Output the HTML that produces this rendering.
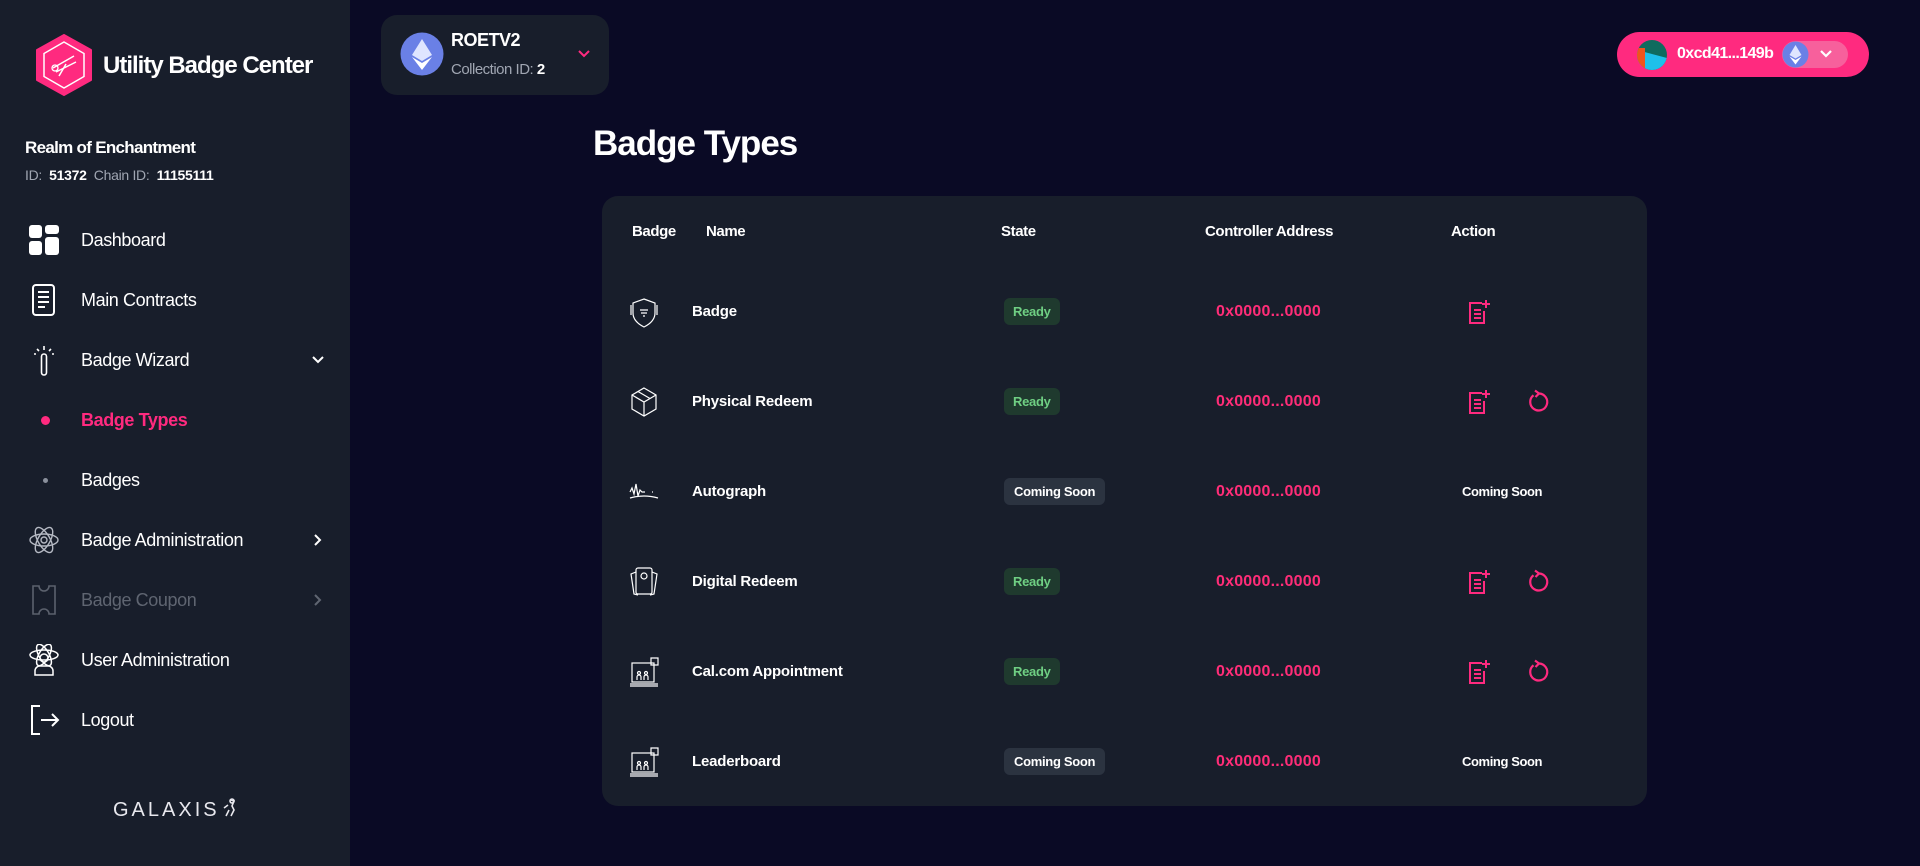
<!DOCTYPE html>
<html><head><meta charset="utf-8"><style>
*{margin:0;padding:0;box-sizing:border-box}
body{width:1920px;height:866px;overflow:hidden;background:#0a0a25;font-family:"Liberation Sans",sans-serif;color:#fff;position:relative}
.sb{position:absolute;left:0;top:0;width:350px;height:866px;background:#181e2b}
.abs{position:absolute}
.mi{position:absolute;left:0;width:350px;height:40px;display:flex;align-items:center}
.mi .ic{position:absolute;left:28px;top:4px;width:32px;height:32px}
.mi .t{position:absolute;left:81px;font-size:18px;letter-spacing:-0.4px}
.chev{position:absolute;left:310px}
.card{position:absolute;left:602px;top:196px;width:1045px;height:610px;background:#181e2b;border-radius:16px}
.th{position:absolute;top:223px;font-size:15px;font-weight:bold;letter-spacing:-0.4px}
.row{position:absolute;left:602px;width:1045px;height:40px}
.row .ic{position:absolute;left:26px;top:4px;width:32px;height:32px}
.row .nm{position:absolute;left:90px;top:11px;font-size:15px;font-weight:bold;letter-spacing:-0.2px}
.pill{position:absolute;left:402px;top:6px;height:27px;border-radius:6px;font-size:13px;font-weight:bold;padding:0 9px;line-height:27px;letter-spacing:-0.3px}
.ready{background:#1f3a2e;color:#6fcf83}
.soon{background:#2b3340;color:#fff;padding:0 10px}
.addr{position:absolute;left:614px;top:11px;color:#ff2d78;font-size:16px;font-weight:bold;letter-spacing:0.2px}
.act1{position:absolute;left:864px;top:7px}
.act2{position:absolute;left:923px;top:7px}
.cs{position:absolute;left:860px;top:12px;font-size:13px;font-weight:bold;letter-spacing:-0.4px}
</style></head><body>
<div class="sb">
  <svg class="abs" style="left:34px;top:34px" width="60" height="62" viewBox="0 0 60 62"><path d="M30 1 L57 16 L57 46 L30 61 L3 46 L3 16Z" fill="#ff2a7f" stroke="#ff2a7f" stroke-width="2" stroke-linejoin="round"/><path d="M30 8 L50 19.5 L50 42.5 L30 54 L10 42.5 L10 19.5Z" fill="none" stroke="#fff" stroke-width="1.5"/><path d="M19 34 L40 22 M22 38 L42 28 M25 42 L32 30" stroke="#fff" stroke-width="1.5" fill="none"/><circle cx="21" cy="34" r="3" fill="none" stroke="#fff" stroke-width="1.3"/></svg>
  <div class="abs" style="left:103px;top:52px;font-size:24px;font-weight:bold;letter-spacing:-1px">Utility Badge Center</div>
  <div class="abs" style="left:25px;top:138px;font-size:17px;font-weight:bold;letter-spacing:-0.7px">Realm of Enchantment</div>
  <div class="abs" style="left:25px;top:167px;font-size:14px;color:#a0a6b2;letter-spacing:-0.3px">ID:&nbsp; <b style="color:#fff">51372</b>&nbsp; Chain ID:&nbsp; <b style="color:#fff">11155111</b></div>

  <div class="mi" style="top:220px"><svg class="ic" viewBox="0 0 32 32"><rect x="1" y="1" width="13" height="13" rx="3" fill="#fff"/><rect x="17" y="1" width="14" height="9" rx="3" fill="#fff"/><rect x="1" y="17" width="13" height="14" rx="3" fill="#fff"/><rect x="17" y="13" width="14" height="18" rx="3" fill="#fff"/></svg><span class="t">Dashboard</span></div>
  <div class="mi" style="top:280px"><svg class="ic" viewBox="0 0 32 32" fill="none" stroke="#fff" stroke-width="2"><rect x="5" y="1" width="21" height="30" rx="3"/><path d="M10 8h11M10 13h11M10 18h11M10 23h7"/></svg><span class="t">Main Contracts</span></div>
  <div class="mi" style="top:340px"><svg class="ic" viewBox="0 0 32 32" fill="none" stroke="#fff" stroke-width="1.6"><rect x="13.5" y="10" width="5" height="21" rx="2.5"/><path d="M16 2v4M9 5l2 2M23 5l-2 2M6 10h2M24 10h2"/></svg><span class="t">Badge Wizard</span><svg class="chev" style="top:13px" width="16" height="14" viewBox="0 0 16 14"><path d="M3 4l5 5 5-5" stroke="#fff" stroke-width="2" fill="none"/></svg></div>
  <div class="mi" style="top:400px"><div class="abs" style="left:41px;top:16px;width:9px;height:9px;border-radius:50%;background:#ff2a7f"></div><span class="t" style="color:#ff2a7f;font-weight:bold">Badge Types</span></div>
  <div class="mi" style="top:460px"><div class="abs" style="left:43px;top:18px;width:5px;height:5px;border-radius:50%;background:#8a909c"></div><span class="t">Badges</span></div>
  <div class="mi" style="top:520px"><svg class="ic" viewBox="0 0 32 32" fill="none" stroke="#b6bac4" stroke-width="1.4"><ellipse cx="16" cy="16" rx="14" ry="6"/><ellipse cx="16" cy="16" rx="14" ry="6" transform="rotate(60 16 16)"/><ellipse cx="16" cy="16" rx="14" ry="6" transform="rotate(-60 16 16)"/><circle cx="16" cy="16" r="3"/></svg><span class="t">Badge Administration</span><svg class="chev" style="top:13px" width="16" height="14" viewBox="0 0 16 14"><path d="M5 2l5 5-5 5" stroke="#fff" stroke-width="2" fill="none"/></svg></div>
  <div class="mi" style="top:580px"><svg class="ic" viewBox="0 0 32 32" fill="none" stroke="#5b616d" stroke-width="1.6"><path d="M5 2h6a5 5 0 0 0 10 0h6v28h-6a5 5 0 0 0-10 0H5z"/></svg><span class="t" style="color:#5f6571">Badge Coupon</span><svg class="chev" style="top:13px" width="16" height="14" viewBox="0 0 16 14"><path d="M5 2l5 5-5 5" stroke="#5f6571" stroke-width="2" fill="none"/></svg></div>
  <div class="mi" style="top:640px"><svg class="ic" viewBox="0 0 32 32" fill="none" stroke="#fff" stroke-width="1.5"><ellipse cx="16" cy="11" rx="14" ry="5"/><ellipse cx="16" cy="11" rx="12" ry="5" transform="rotate(60 16 11)"/><ellipse cx="16" cy="11" rx="12" ry="5" transform="rotate(-60 16 11)"/><circle cx="16" cy="14" r="4"/><path d="M7 31v-4a5 5 0 0 1 5-5h8a5 5 0 0 1 5 5v4z"/></svg><span class="t">User Administration</span></div>
  <div class="mi" style="top:700px"><svg class="ic" viewBox="0 0 32 32" fill="none" stroke="#fff" stroke-width="2"><path d="M12 2H4v28h8M13 16h16M24 10l6 6-6 6"/></svg><span class="t">Logout</span></div>
  <div class="abs" style="left:113px;top:799px;font-size:20px;letter-spacing:3px;color:#e8e8ee">GALAXIS</div>
  <svg class="abs" style="left:222px;top:798px" width="14" height="20" viewBox="0 0 14 20" fill="none" stroke="#e8e8ee" stroke-width="1.6"><path d="M9 2l3 1-2 5 2 4-3 6M6 7l-4 3M7 12l-3 6"/><circle cx="10" cy="3" r="2"/></svg>
</div>

<div class="abs" style="left:381px;top:15px;width:228px;height:80px;border-radius:16px;background:#181e2b"></div>
<svg class="abs" style="left:400px;top:32px" width="44" height="44" viewBox="0 0 44 44"><circle cx="22" cy="22" r="21.5" fill="#6a80e6"/><path d="M22 7l-10 16 10 6 10-6z" fill="#dfe5ff"/><path d="M22 31l-10-6 10 13 10-13z" fill="#fff"/></svg>
<div class="abs" style="left:451px;top:30px;font-size:18px;font-weight:bold;letter-spacing:-0.5px">ROETV2</div>
<div class="abs" style="left:451px;top:61px;font-size:15px;color:#a0a6b2;letter-spacing:-0.5px">Collection ID: <b style="color:#fff">2</b></div>
<svg class="abs" style="left:576px;top:48px" width="16" height="12" viewBox="0 0 16 12"><path d="M3 3l5 5 5-5" stroke="#ff2a7f" stroke-width="2" fill="none"/></svg>

<div class="abs" style="left:1617px;top:32px;width:252px;height:45px;border-radius:23px;background:#ff2a7f"></div>
<svg class="abs" style="left:1637px;top:40px" width="30" height="30" viewBox="0 0 30 30"><clipPath id="c"><circle cx="15" cy="15" r="15"/></clipPath><g clip-path="url(#c)"><rect width="30" height="30" fill="#0f6b5e"/><path d="M0 10L30 18V30H0z" fill="#1ec0ea"/><path d="M0 8H8V30H0z" fill="#f0541c"/><path d="M20 30L30 24V30z" fill="#f0a020"/></g></svg>
<div class="abs" style="left:1677px;top:45px;font-size:16px;font-weight:bold;letter-spacing:-0.6px">0xcd41...149b</div>
<div class="abs" style="left:1782px;top:41px;width:66px;height:27px;border-radius:14px;background:#f7609c"></div>
<svg class="abs" style="left:1782px;top:41px" width="27" height="27" viewBox="0 0 27 27"><circle cx="13.5" cy="13.5" r="13" fill="#6a80e6"/><path d="M13.5 4l-6 10 6 3.5 6-3.5z" fill="#dfe5ff"/><path d="M13.5 19l-6-3.5 6 8 6-8z" fill="#fff"/></svg>
<svg class="abs" style="left:1818px;top:47px" width="16" height="14" viewBox="0 0 16 14"><path d="M3 4l5 5 5-5" stroke="#fff" stroke-width="2.2" fill="none"/></svg>

<div class="abs" style="left:593px;top:124px;font-size:35px;font-weight:bold;letter-spacing:-1px">Badge Types</div>

<div class="card"></div>
<div class="th" style="left:632px">Badge</div>
<div class="th" style="left:706px">Name</div>
<div class="th" style="left:1001px">State</div>
<div class="th" style="left:1205px">Controller Address</div>
<div class="th" style="left:1451px">Action</div>

<div class="row" style="top:292px"><svg class="ic" viewBox="0 0 32 32" fill="none" stroke="#fff" stroke-width="1.2"><path d="M16 3l11 4v10c0 7-5 11-11 14C10 28 5 24 5 17V7z"/><path d="M3 9v10M29 9v10M12 14h8M13 17h6M15 20h2"/></svg><div class="nm">Badge</div><div class="pill ready">Ready</div><div class="addr">0x0000...0000</div>
<svg class="act1" width="26" height="26" viewBox="0 0 26 26" fill="none" stroke="#ff2a7f" stroke-width="2"><path d="M16 4H4v20h14V12"/><path d="M8 11h7M8 15h7M8 19h7M20 1v8M16 5h8"/></svg></div>
<div class="row" style="top:382px"><svg class="ic" viewBox="0 0 32 32" fill="none" stroke="#fff" stroke-width="1.2"><path d="M16 2l12 7v14l-12 7-12-7V9z"/><path d="M4 9l12 7 12-7M16 16v14M10 5.5l12 7"/></svg><div class="nm">Physical Redeem</div><div class="pill ready">Ready</div><div class="addr">0x0000...0000</div>
<svg class="act1" width="26" height="26" viewBox="0 0 26 26" fill="none" stroke="#ff2a7f" stroke-width="2"><path d="M16 4H4v20h14V12"/><path d="M8 11h7M8 15h7M8 19h7M20 1v8M16 5h8"/></svg>
<svg class="act2" width="26" height="26" viewBox="0 0 26 26" fill="none" stroke="#ff2a7f" stroke-width="2.2"><path d="M14 4.5a8.5 8.5 0 1 1-5.5 1.8"/><path d="M10 1.5l4 3-3.5 3.5"/></svg></div>
<div class="row" style="top:472px"><svg class="ic" viewBox="0 0 32 32" fill="none" stroke="#fff" stroke-width="1.2"><path d="M2 16l2-4 2 6 2-10 2 12 2-6 2 2h3M24 16h1"/><path d="M2 22q14-4 28 0"/></svg><div class="nm">Autograph</div><div class="pill soon">Coming Soon</div><div class="addr">0x0000...0000</div><div class="cs">Coming Soon</div></div>
<div class="row" style="top:562px"><svg class="ic" viewBox="0 0 32 32" fill="none" stroke="#fff" stroke-width="1.2"><rect x="8" y="2" width="16" height="26" rx="2"/><path d="M8 6L3 8l3 20 4 1M24 6l5 2-3 20-4 1"/><circle cx="16" cy="10" r="3"/></svg><div class="nm">Digital Redeem</div><div class="pill ready">Ready</div><div class="addr">0x0000...0000</div>
<svg class="act1" width="26" height="26" viewBox="0 0 26 26" fill="none" stroke="#ff2a7f" stroke-width="2"><path d="M16 4H4v20h14V12"/><path d="M8 11h7M8 15h7M8 19h7M20 1v8M16 5h8"/></svg>
<svg class="act2" width="26" height="26" viewBox="0 0 26 26" fill="none" stroke="#ff2a7f" stroke-width="2.2"><path d="M14 4.5a8.5 8.5 0 1 1-5.5 1.8"/><path d="M10 1.5l4 3-3.5 3.5"/></svg></div>
<div class="row" style="top:652px"><svg class="ic" viewBox="0 0 32 32" fill="none" stroke="#fff" stroke-width="1.2"><rect x="4" y="7" width="22" height="19"/><path d="M2 28h28M2 30h28M23 2h7v7h-7zM9 24v-3a2 2 0 0 1 4 0v3M16 24v-3a2 2 0 0 1 4 0v3"/><circle cx="11" cy="17" r="1.5"/><circle cx="18" cy="17" r="1.5"/></svg><div class="nm">Cal.com Appointment</div><div class="pill ready">Ready</div><div class="addr">0x0000...0000</div>
<svg class="act1" width="26" height="26" viewBox="0 0 26 26" fill="none" stroke="#ff2a7f" stroke-width="2"><path d="M16 4H4v20h14V12"/><path d="M8 11h7M8 15h7M8 19h7M20 1v8M16 5h8"/></svg>
<svg class="act2" width="26" height="26" viewBox="0 0 26 26" fill="none" stroke="#ff2a7f" stroke-width="2.2"><path d="M14 4.5a8.5 8.5 0 1 1-5.5 1.8"/><path d="M10 1.5l4 3-3.5 3.5"/></svg></div>
<div class="row" style="top:742px"><svg class="ic" viewBox="0 0 32 32" fill="none" stroke="#fff" stroke-width="1.2"><rect x="4" y="7" width="22" height="19"/><path d="M2 28h28M2 30h28M23 2h7v7h-7zM9 24v-3a2 2 0 0 1 4 0v3M16 24v-3a2 2 0 0 1 4 0v3"/><circle cx="11" cy="17" r="1.5"/><circle cx="18" cy="17" r="1.5"/></svg><div class="nm">Leaderboard</div><div class="pill soon">Coming Soon</div><div class="addr">0x0000...0000</div><div class="cs">Coming Soon</div></div>
</body></html>
